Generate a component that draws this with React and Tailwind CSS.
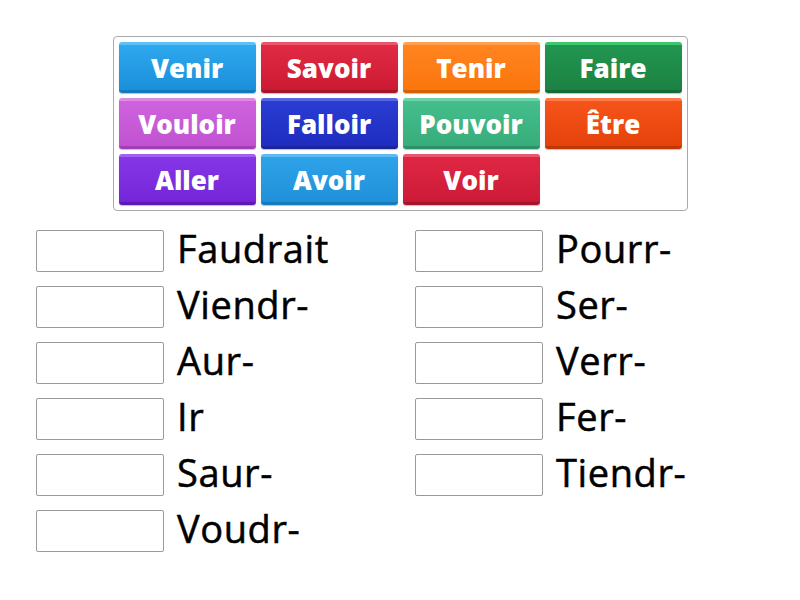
const tiles = [
  { label: 'Venir', bg: 'bg-gradient-to-b from-[#2ea8ee] to-[#1b8fdb]', edge: 'border-t-[#5cc0f4] border-b-[#1479bd]' },
  { label: 'Savoir', bg: 'bg-gradient-to-b from-[#e12a45] to-[#cc1a33]', edge: 'border-t-[#ea5668] border-b-[#a8142a]' },
  { label: 'Tenir', bg: 'bg-gradient-to-b from-[#ff8420] to-[#fb760a]', edge: 'border-t-[#ffa050] border-b-[#d46205]' },
  { label: 'Faire', bg: 'bg-gradient-to-b from-[#229650] to-[#1c8243]', edge: 'border-t-[#3cc66d] border-b-[#156c37]' },
  { label: 'Vouloir', bg: 'bg-gradient-to-b from-[#cf62dd] to-[#c153d2]', edge: 'border-t-[#de8ae8] border-b-[#a23fb3]' },
  { label: 'Falloir', bg: 'bg-gradient-to-b from-[#2a3cd2] to-[#1f2dc0]', edge: 'border-t-[#5564e0] border-b-[#1a249c]' },
  { label: 'Pouvoir', bg: 'bg-gradient-to-b from-[#45bd8c] to-[#38ad7c]', edge: 'border-t-[#6fd1a7] border-b-[#2c9166]' },
  { label: 'Être', bg: 'bg-gradient-to-b from-[#f5541a] to-[#e5420a]', edge: 'border-t-[#ff7a44] border-b-[#c23606]' },
  { label: 'Aller', bg: 'bg-gradient-to-b from-[#8636e6] to-[#7425d8]', edge: 'border-t-[#a060f0] border-b-[#5e18b8]' },
  { label: 'Avoir', bg: 'bg-gradient-to-b from-[#2ea2e8] to-[#1f91da]', edge: 'border-t-[#5cbaf0] border-b-[#177abd]' },
  { label: 'Voir', bg: 'bg-gradient-to-b from-[#df2744] to-[#cc1a36]', edge: 'border-t-[#ea5670] border-b-[#a8142c]' },
];

const left = ['Faudrait', 'Viendr-', 'Aur-', 'Ir', 'Saur-', 'Voudr-'];
const right = ['Pourr-', 'Ser-', 'Verr-', 'Fer-', 'Tiendr-'];

function Tile({ tile }) {
  return (
    <div
      className={`h-[51px] rounded-[3px] border-t-[3px] border-b-[3px] flex items-center justify-center text-white font-extrabold text-[26px] leading-none shadow-[0_1px_1px_rgba(0,0,0,0.25)] ${tile.bg} ${tile.edge}`}
    >
      {tile.label}
    </div>
  );
}

function Slot({ text }) {
  return (
    <div className="flex items-center h-[42px] mb-[14px]">
      <div className="w-[128px] h-[42px] shrink-0 border border-[#9a9a9a] rounded-[2px] bg-white" />
      <span className="ml-[13px] -mt-[6px] text-[38px] leading-none text-black tracking-[0.6px] [-webkit-text-stroke:0.5px_#000]">{text}</span>
    </div>
  );
}

export default function App() {
  return (
    <div className="w-[800px] h-[600px] bg-white font-['Open_Sans',sans-serif] overflow-hidden">
      <div className="pt-[36px] flex justify-center">
        <div className="w-[575px] border border-[#aaaaaa] rounded-[4px] p-[5px] grid grid-cols-4 gap-[5px]">
          {tiles.map((tile) => (
            <Tile key={tile.label} tile={tile} />
          ))}
        </div>
      </div>
      <div className="flex pt-[19px] pl-[36px]">
        <div className="w-[379px]">
          {left.map((t) => (
            <Slot key={t} text={t} />
          ))}
        </div>
        <div>
          {right.map((t) => (
            <Slot key={t} text={t} />
          ))}
        </div>
      </div>
    </div>
  );
}
